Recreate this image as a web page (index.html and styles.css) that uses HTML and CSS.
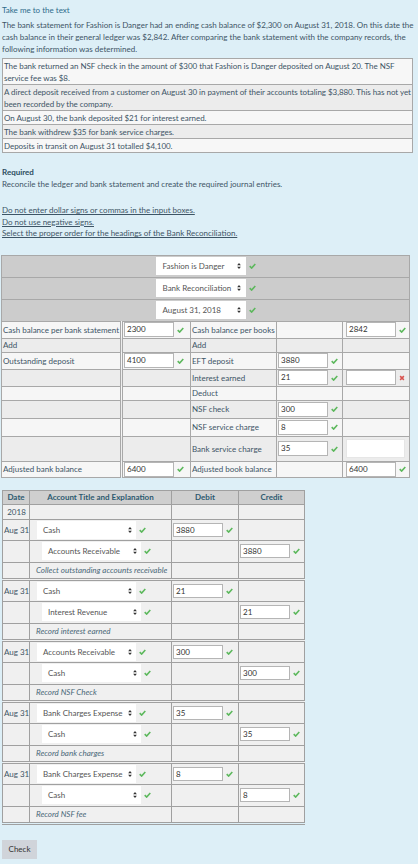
FILE: index.html
```html
<!DOCTYPE html>
<html>
<head>
<meta charset="utf-8">
<link rel="stylesheet" href="styles.css">
</head>
<body>
<div class="page">
  <div class="toplink">Take me to the text</div>
  <p class="intro">The bank statement for Fashion is Danger had an ending cash balance of $2,300 on August 31, 2018. On this date the cash balance in their general ledger was $2,842. After comparing the bank statement with the company records, the following information was determined.</p>
  <table class="facts">
    <tr class="odd"><td>The bank returned an NSF check in the amount of $300 that Fashion is Danger deposited on August 20. The NSF service fee was $8.</td></tr>
    <tr class="even"><td>A direct deposit received from a customer on August 30 in payment of their accounts totaling $3,880. This has not yet been recorded by the company.</td></tr>
    <tr class="odd"><td>On August 30, the bank deposited $21 for interest earned.</td></tr>
    <tr class="even"><td>The bank withdrew $35 for bank service charges.</td></tr>
    <tr class="odd"><td>Deposits in transit on August 31 totalled $4,100.</td></tr>
  </table>
  <div class="req"><b>Required</b><br>Reconcile the ledger and bank statement and create the required journal entries.</div>
  <div class="notes">
    <div>Do not enter dollar signs or commas in the input boxes.</div>
    <div>Do not use negative signs.</div>
    <div>Select the proper order for the headings of the Bank Reconciliation.</div>
  </div>

  <table class="recon">
    <colgroup><col class="c1"><col class="c2"><col class="c3"><col class="c4"><col class="c5"></colgroup>
    <tr class="hd"><td colspan="5"><span class="sel hsel">Fashion is Danger<svg class="arr" viewBox="0 0 5 8"><path d="M2.5 0L5 3H0Z M2.5 8L5 5H0Z"/></svg></span><svg class="ok" viewBox="0 0 10 8"><path d="M1 4.2L3.8 7L9 1"/></svg></td></tr>
    <tr class="hd"><td colspan="5"><span class="sel hsel">Bank Reconciliation<svg class="arr" viewBox="0 0 5 8"><path d="M2.5 0L5 3H0Z M2.5 8L5 5H0Z"/></svg></span><svg class="ok" viewBox="0 0 10 8"><path d="M1 4.2L3.8 7L9 1"/></svg></td></tr>
    <tr class="hd"><td colspan="5"><span class="sel hsel">August 31, 2018<svg class="arr" viewBox="0 0 5 8"><path d="M2.5 0L5 3H0Z M2.5 8L5 5H0Z"/></svg></span><svg class="ok" viewBox="0 0 10 8"><path d="M1 4.2L3.8 7L9 1"/></svg></td></tr>
    <tr class="r odd h17">
      <td class="lbl">Cash balance per bank statement</td>
      <td><span class="inp">2300</span><svg class="ok" viewBox="0 0 10 8"><path d="M1 4.2L3.8 7L9 1"/></svg></td>
      <td class="lbl">Cash balance per books</td>
      <td></td>
      <td class="p5"><span class="inp">2842</span><svg class="ok" viewBox="0 0 10 8"><path d="M1 4.2L3.8 7L9 1"/></svg></td>
    </tr>
    <tr class="r even h14"><td class="lbl">Add</td><td></td><td class="lbl">Add</td><td></td><td></td></tr>
    <tr class="r odd h17">
      <td class="lbl">Outstanding deposit</td>
      <td><span class="inp">4100</span><svg class="ok" viewBox="0 0 10 8"><path d="M1 4.2L3.8 7L9 1"/></svg></td>
      <td class="lbl">EFT deposit</td>
      <td><span class="inp">3880</span><svg class="ok" viewBox="0 0 10 8"><path d="M1 4.2L3.8 7L9 1"/></svg></td>
      <td></td>
    </tr>
    <tr class="r even h17">
      <td></td><td></td>
      <td class="lbl">Interest earned</td>
      <td><span class="inp">21</span><svg class="ok" viewBox="0 0 10 8"><path d="M1 4.2L3.8 7L9 1"/></svg></td>
      <td class="p5"><span class="inp"></span><svg class="bad" viewBox="0 0 8 8"><path d="M1.5 1.5L6.5 6.5M6.5 1.5L1.5 6.5"/></svg></td>
    </tr>
    <tr class="r odd h14"><td></td><td></td><td class="lbl">Deduct</td><td></td><td></td></tr>
    <tr class="r even h18">
      <td></td><td></td>
      <td class="lbl">NSF check</td>
      <td><span class="inp">300</span><svg class="ok" viewBox="0 0 10 8"><path d="M1 4.2L3.8 7L9 1"/></svg></td>
      <td></td>
    </tr>
    <tr class="r odd h18">
      <td></td><td></td>
      <td class="lbl">NSF service charge</td>
      <td><span class="inp">8</span><svg class="ok" viewBox="0 0 10 8"><path d="M1 4.2L3.8 7L9 1"/></svg></td>
      <td></td>
    </tr>
    <tr class="r even h24">
      <td></td><td></td>
      <td class="lbl">Bank service charge</td>
      <td><span class="inp">35</span><svg class="ok" viewBox="0 0 10 8"><path d="M1 4.2L3.8 7L9 1"/></svg></td>
      <td class="p5"><span class="blank"></span></td>
    </tr>
    <tr class="r odd h16">
      <td class="lbl">Adjusted bank balance</td>
      <td><span class="inp">6400</span><svg class="ok" viewBox="0 0 10 8"><path d="M1 4.2L3.8 7L9 1"/></svg></td>
      <td class="lbl">Adjusted book balance</td>
      <td></td>
      <td class="p5"><span class="inp">6400</span><svg class="ok" viewBox="0 0 10 8"><path d="M1 4.2L3.8 7L9 1"/></svg></td>
    </tr>
  </table>

  <table class="journal">
    <colgroup><col class="jd"><col class="ja"><col class="jb"><col class="jc"></colgroup>
    <tr class="jh"><th>Date</th><th>Account Title and Explanation</th><th>Debit</th><th>Credit</th></tr>
    <tr class="yr"><td class="ctr">2018</td><td></td><td></td><td></td></tr>

    <tr class="e1"><td>Aug 31</td><td class="acc"><span class="sel jsel">Cash<svg class="arr" viewBox="0 0 5 8"><path d="M2.5 0L5 3H0Z M2.5 8L5 5H0Z"/></svg></span><svg class="ok" viewBox="0 0 10 8"><path d="M1 4.2L3.8 7L9 1"/></svg></td><td><span class="inp">3880</span><svg class="ok" viewBox="0 0 10 8"><path d="M1 4.2L3.8 7L9 1"/></svg></td><td></td></tr>
    <tr class="e2"><td></td><td class="acc ind"><span class="sel jsel">Accounts Receivable<svg class="arr" viewBox="0 0 5 8"><path d="M2.5 0L5 3H0Z M2.5 8L5 5H0Z"/></svg></span><svg class="ok" viewBox="0 0 10 8"><path d="M1 4.2L3.8 7L9 1"/></svg></td><td></td><td><span class="inp">3880</span><svg class="ok" viewBox="0 0 10 8"><path d="M1 4.2L3.8 7L9 1"/></svg></td></tr>
    <tr class="ex"><td></td><td class="exp">Collect outstanding accounts receivable</td><td></td><td></td></tr>

    <tr class="e1"><td>Aug 31</td><td class="acc"><span class="sel jsel">Cash<svg class="arr" viewBox="0 0 5 8"><path d="M2.5 0L5 3H0Z M2.5 8L5 5H0Z"/></svg></span><svg class="ok" viewBox="0 0 10 8"><path d="M1 4.2L3.8 7L9 1"/></svg></td><td><span class="inp">21</span><svg class="ok" viewBox="0 0 10 8"><path d="M1 4.2L3.8 7L9 1"/></svg></td><td></td></tr>
    <tr class="e2"><td></td><td class="acc ind"><span class="sel jsel">Interest Revenue<svg class="arr" viewBox="0 0 5 8"><path d="M2.5 0L5 3H0Z M2.5 8L5 5H0Z"/></svg></span><svg class="ok" viewBox="0 0 10 8"><path d="M1 4.2L3.8 7L9 1"/></svg></td><td></td><td><span class="inp">21</span><svg class="ok" viewBox="0 0 10 8"><path d="M1 4.2L3.8 7L9 1"/></svg></td></tr>
    <tr class="ex"><td></td><td class="exp">Record interest earned</td><td></td><td></td></tr>

    <tr class="e1"><td>Aug 31</td><td class="acc"><span class="sel jsel">Accounts Receivable<svg class="arr" viewBox="0 0 5 8"><path d="M2.5 0L5 3H0Z M2.5 8L5 5H0Z"/></svg></span><svg class="ok" viewBox="0 0 10 8"><path d="M1 4.2L3.8 7L9 1"/></svg></td><td><span class="inp">300</span><svg class="ok" viewBox="0 0 10 8"><path d="M1 4.2L3.8 7L9 1"/></svg></td><td></td></tr>
    <tr class="e2"><td></td><td class="acc ind"><span class="sel jsel">Cash<svg class="arr" viewBox="0 0 5 8"><path d="M2.5 0L5 3H0Z M2.5 8L5 5H0Z"/></svg></span><svg class="ok" viewBox="0 0 10 8"><path d="M1 4.2L3.8 7L9 1"/></svg></td><td></td><td><span class="inp">300</span><svg class="ok" viewBox="0 0 10 8"><path d="M1 4.2L3.8 7L9 1"/></svg></td></tr>
    <tr class="ex"><td></td><td class="exp">Record NSF Check</td><td></td><td></td></tr>

    <tr class="e1"><td>Aug 31</td><td class="acc"><span class="sel jsel">Bank Charges Expense<svg class="arr" viewBox="0 0 5 8"><path d="M2.5 0L5 3H0Z M2.5 8L5 5H0Z"/></svg></span><svg class="ok" viewBox="0 0 10 8"><path d="M1 4.2L3.8 7L9 1"/></svg></td><td><span class="inp">35</span><svg class="ok" viewBox="0 0 10 8"><path d="M1 4.2L3.8 7L9 1"/></svg></td><td></td></tr>
    <tr class="e2"><td></td><td class="acc ind"><span class="sel jsel">Cash<svg class="arr" viewBox="0 0 5 8"><path d="M2.5 0L5 3H0Z M2.5 8L5 5H0Z"/></svg></span><svg class="ok" viewBox="0 0 10 8"><path d="M1 4.2L3.8 7L9 1"/></svg></td><td></td><td><span class="inp">35</span><svg class="ok" viewBox="0 0 10 8"><path d="M1 4.2L3.8 7L9 1"/></svg></td></tr>
    <tr class="ex"><td></td><td class="exp">Record bank charges</td><td></td><td></td></tr>

    <tr class="e1"><td>Aug 31</td><td class="acc"><span class="sel jsel">Bank Charges Expense<svg class="arr" viewBox="0 0 5 8"><path d="M2.5 0L5 3H0Z M2.5 8L5 5H0Z"/></svg></span><svg class="ok" viewBox="0 0 10 8"><path d="M1 4.2L3.8 7L9 1"/></svg></td><td><span class="inp">8</span><svg class="ok" viewBox="0 0 10 8"><path d="M1 4.2L3.8 7L9 1"/></svg></td><td></td></tr>
    <tr class="e2"><td></td><td class="acc ind"><span class="sel jsel">Cash<svg class="arr" viewBox="0 0 5 8"><path d="M2.5 0L5 3H0Z M2.5 8L5 5H0Z"/></svg></span><svg class="ok" viewBox="0 0 10 8"><path d="M1 4.2L3.8 7L9 1"/></svg></td><td></td><td><span class="inp">8</span><svg class="ok" viewBox="0 0 10 8"><path d="M1 4.2L3.8 7L9 1"/></svg></td></tr>
    <tr class="ex last"><td></td><td class="exp">Record NSF fee</td><td></td><td></td></tr>
  </table>

  <button class="check">Check</button>
</div>
</body>
</html>
```

FILE: styles.css
```css
html, body {
  margin: 0;
  padding: 0;
  background: #ddeff7;
}
body {
  font-family: Lato, "Open Sans", sans-serif;
  font-size: 8px;
  line-height: 12px;
  color: #3d5566;
}
.page {
  padding: 4px 4px 20px 2px;
}
.toplink {
  color: #2f6c8c;
}
.intro {
  margin: 3px 0 0 0;
}
.facts {
  margin-top: 3px;
  width: 411px;
  border-collapse: collapse;
  letter-spacing: -0.04px;
}
.facts td {
  border: 1px solid #a8a8a8;
  padding: 1px 1px 0 1px;
  line-height: 12px;
  vertical-align: top;
}
.facts .odd td { background: #f7f7f7; }
.facts .even td { background: #ececec; }

.req {
  margin-top: 13px;
}
.req b { color: #2b4d5e; }
.notes {
  margin-top: 15px;
  line-height: 11.5px;
}
.notes div {
  text-decoration: underline;
}

/* reconciliation */
.recon {
  margin: 15px 0 0 -1px;
  width: 408px;
  border-collapse: collapse;
  table-layout: fixed;
}
.recon col.c1 { width: 120px; }
.recon col.c2 { width: 69px; }
.recon col.c3 { width: 86px; }
.recon col.c4 { width: 66px; }
.recon col.c5 { width: 67px; }
.recon td {
  border: 1px solid #a8a8a8;
  padding: 0 0 0 1px;
  white-space: nowrap;
  vertical-align: middle;
  line-height: 12px;
}
.recon td:first-child {
  border-right: 3px double #a8a8a8;
}
.recon .hd td {
  background: #cccccc;
  height: 21px;
  text-align: center;
  padding: 0;
  border-right: 1px solid #a8a8a8;
}
.recon .odd td { background: #f6f6f6; }
.recon .even td { background: #ececec; }
.recon .h14 td { height: 13px; }
.recon .h16 td { height: 15px; }
.recon .h17 td { height: 16px; }
.recon .h18 td { height: 17px; }
.recon .h24 td { height: 24px; }
.recon td.p5 { padding-left: 3px; }

.sel {
  display: inline-flex;
  align-items: center;
  justify-content: space-between;
  background: #fff;
  color: #555;
  box-sizing: border-box;
  vertical-align: middle;
}
.hsel {
  width: 90px;
  height: 18px;
  padding: 0 5px 0 7px;
  text-align: left;
}
.arr {
  width: 4px;
  height: 6px;
  fill: #333;
  flex: none;
}
.ok {
  width: 7px;
  height: 6px;
  margin-left: 3px;
  vertical-align: middle;
  fill: none;
  stroke: #5cb85c;
  stroke-width: 2.2;
}
.bad {
  width: 6px;
  height: 6px;
  margin-left: 3px;
  vertical-align: middle;
  fill: none;
  stroke: #d9534f;
  stroke-width: 2;
}
.inp {
  display: inline-block;
  box-sizing: border-box;
  width: 50px;
  height: 15px;
  border: 1px solid #b5b5b5;
  background: #fff;
  color: #333;
  padding: 0 2px;
  line-height: 13px;
  vertical-align: middle;
}
.blank {
  display: inline-block;
  width: 59px;
  height: 19px;
  background: #fff;
  border: 1px solid #e6e6e6;
  box-sizing: border-box;
  vertical-align: middle;
}

/* journal */
.journal {
  margin-top: 12px;
  width: 302px;
  border-collapse: collapse;
  table-layout: fixed;
}
.journal col.jd { width: 27px; }
.journal col.ja { width: 142px; }
.journal col.jb { width: 67px; }
.journal col.jc { width: 66px; }
.journal th {
  background: #cfcfcf;
  color: #2d5a6f;
  font-weight: bold;
  border: 1px solid #a0a0a0;
  height: 13px;
  padding: 0;
  line-height: 12px;
}
.journal td {
  border: 1px solid #a0a0a0;
  background: #f0f0f0;
  padding: 0 0 0 1px;
  white-space: nowrap;
  vertical-align: middle;
  line-height: 12px;
}
.journal td.ctr { text-align: center; }
.journal .yr td { height: 14px; }
.journal .e1 td { height: 20px; }
.journal .e2 td { height: 21px; }
.journal .ex td {
  height: 15px;
  border-bottom: 3px double #a0a0a0;
}
.journal td.acc { padding-left: 7px; }
.journal td.acc.ind { padding-left: 12px; }
.journal td.exp {
  font-style: italic;
  color: #4a6878;
  padding-left: 6px;
}
.jsel {
  width: 99px;
  height: 18px;
  padding: 0 4px 0 6px;
}
.journal .inp { height: 14px; }

.check {
  display: block;
  margin-top: 15px;
  width: 35px;
  height: 19px;
  padding: 0;
  border: none;
  background: #d0d4da;
  color: #333;
  font-family: Lato, "Open Sans", sans-serif;
  font-size: 8px;
}
```
